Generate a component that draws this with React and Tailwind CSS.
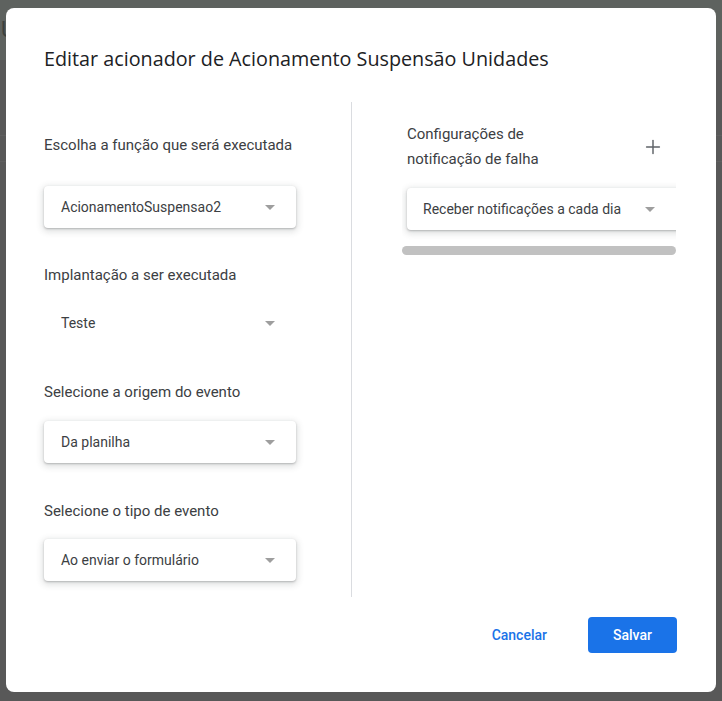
import { Plus } from 'lucide-react';

const font = { fontFamily: 'Roboto, "Liberation Sans", Arial, sans-serif' };

// Grey drop arrow used in the selects
function Caret({ className = '' }) {
  return (
    <svg width="10" height="5" viewBox="0 0 10 5" className={className}>
      <path d="M0 0h10L5 5z" fill="#9e9e9e" />
    </svg>
  );
}

// Raised select box
function Select({ value, flat = false, className = '', caretClass = 'mr-[21px]' }) {
  return (
    <div
      className={`flex h-[42px] shrink-0 items-center rounded-[4px] bg-white pl-[17px] text-[14px] text-[#3c4043] ${
        flat ? '' : 'shadow-[0_1px_2px_rgba(60,64,67,0.3),0_2px_6px_2px_rgba(60,64,67,0.15)]'
      } ${className}`}
    >
      <span className="whitespace-nowrap">{value}</span>
      <Caret className={`ml-auto ${caretClass}`} />
    </div>
  );
}

function Label({ children, className = '' }) {
  return <p className={`h-[20px] text-[15px] leading-[20px] text-[#3c4043] ${className}`}>{children}</p>;
}

export default function App() {
  return (
    <div className="relative h-[701px] w-[722px] overflow-hidden bg-[#585858]" style={font}>

      {/* Dimmed page behind */}
      <div className="h-[60px] bg-[#5e625f] pl-px pt-[18px] text-[22px] leading-[24px] text-[#3c403d]">U</div>
      <div className="mt-[75px] h-px bg-[#5f5f5f]" />
      <div className="mt-[25px] h-px bg-[#5f5f5f]" />

      {/* Dialog */}
      <div className="absolute left-[6px] top-[8px] flex h-[684px] w-[710px] flex-col rounded-[8px] bg-white">

        <h2
          className="pl-[38px] pt-[37px] text-[19.75px] leading-[28px] text-[#202124]"
          style={{ fontFamily: '"Open Sans", Roboto, sans-serif' }}
        >
          Editar acionador de Acionamento Suspensão Unidades
        </h2>

        <div className="mt-[29px] flex">

          {/* Left column */}
          <div className="flex w-[345px] flex-col pl-[38px]">
            <Label className="mt-[33px]">Escolha a função que será executada</Label>
            <Select value="AcionamentoSuspensao2" className="mt-[31px] w-[252px]" />

            <Label className="mt-[37px]">Implantação a ser executada</Label>
            <Select value="Teste" flat className="mt-[17px] w-[252px]" />

            <Label className="mt-[38px]">Selecione a origem do evento</Label>
            <Select value="Da planilha" className="mt-[19px] w-[252px]" />

            <Label className="mt-[38px]">Selecione o tipo de evento</Label>
            <Select value="Ao enviar o formulário" className="mt-[18px] w-[252px]" />
          </div>

          <div className="h-[495px] w-px bg-[#dadce0]" />

          {/* Right column */}
          <div className="pl-[50px]">
            <div className="w-[274px] overflow-hidden">
              <div className="pl-[5px]">
                <div className="mt-[20px] flex w-[257px] items-center justify-between">
                  <p className="w-[175px] text-[15px] leading-[25px] text-[#3c4043]">
                    Configurações de notificação de falha
                  </p>
                  <Plus className="h-[22px] w-[22px] text-[#5f6368]" strokeWidth={1.6} />
                </div>
                <Select
                  value="Receber notificações a cada dia"
                  className="mt-[16px] w-[282px] !pl-[16px]"
                  caretClass="mr-[34px]"
                />
              </div>
              <div className="mt-[16px] h-[9px] rounded-full bg-[#c1c1c1]" />
            </div>
          </div>
        </div>

        {/* Actions */}
        <div className="mt-[20px] flex items-center justify-end pr-[39px]">
          <button className="mr-[25px] h-[36px] px-[16px] text-[14px] font-medium text-[#1a73e8]">Cancelar</button>
          <button className="h-[36px] w-[89px] rounded-[4px] bg-[#1a73e8] text-[14px] font-medium text-white">
            Salvar
          </button>
        </div>
      </div>
    </div>
  );
}
